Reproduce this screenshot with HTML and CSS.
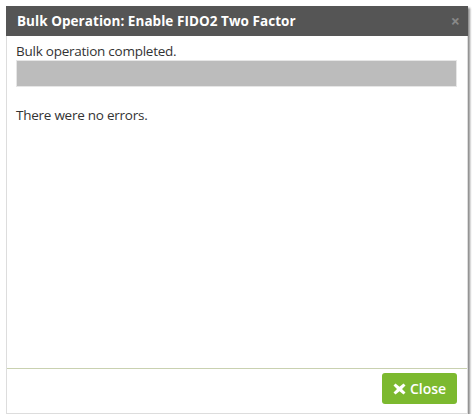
FILE: index.html
```html
<!DOCTYPE html>
<html>
<head>
<meta charset="utf-8">
<link rel="stylesheet" href="styles.css">
</head>
<body>
<div class="dialog">
  <div class="header">
    <span class="title">Bulk Operation: Enable FIDO2 Two Factor</span>
    <span class="x">&#215;</span>
  </div>
  <div class="content">
    <div class="msg">Bulk operation completed.</div>
    <div class="bar"></div>
    <div class="result">There were no errors.</div>
  </div>
  <div class="footer">
    <button class="btn"><svg class="ico" width="13" height="12" viewBox="0 0 13 12"><path d="M2.5 0.5 L6.5 3.8 L10.5 0.5 L12.5 2.5 L9 6 L12.5 9.5 L10.5 11.5 L6.5 8.2 L2.5 11.5 L0.5 9.5 L4 6 L0.5 2.5 Z" fill="#fff"/></svg>Close</button>
  </div>
</div>
</body>
</html>
```
FILE: styles.css
```css
html, body { margin: 0; padding: 0; background: #fff; }
body { font-family: "Open Sans", "Liberation Sans", sans-serif; color: #333; }
.dialog {
  margin: 6px 0 0 6px;
  width: 462px;
  height: 408px;
  box-sizing: border-box;
  border: 1px solid #ddd;
  border-top: none;
  box-shadow: 2px 2px 2px rgba(0,0,0,0.45);
  display: flex;
  flex-direction: column;
  background: #fff;
}
.header {
  height: 30px;
  background: #555;
  margin: 0 -1px;
  display: flex;
  align-items: center;
  justify-content: space-between;
  padding: 0 8px 0 11px;
}
.title { color: #fff; font-weight: bold; font-size: 13.5px; letter-spacing: 0.05px; }
.x { color: #888; font-size: 16px; font-weight: bold; }
.content { flex: 1; padding: 6px 10px 0 9px; }
.msg { font-size: 13.5px; line-height: 18px; color: #333; letter-spacing: -0.25px; }
.bar {
  height: 25px;
  background: #bcbcbc;
  border: 1px solid #e6e6e6;
}
.result { font-size: 13.5px; line-height: 18px; margin-top: 19px; color: #333; letter-spacing: -0.25px; }
.footer {
  border-top: 1px solid #c9d1b0;
  height: 40px;
  display: flex;
  justify-content: flex-end;
  align-items: flex-start;
  padding: 4px 10px 0 0;
}
.btn {
  height: 31px;
  width: 75px;
  background: #7cb92f;
  border: none;
  border-radius: 3px;
  color: #fff;
  font-family: "Open Sans", "Liberation Sans", sans-serif;
  font-weight: 600;
  font-size: 14px;
  display: flex;
  align-items: center;
  justify-content: center;
  gap: 4px;
  padding: 0;
}
.ico { display: block; }
```
